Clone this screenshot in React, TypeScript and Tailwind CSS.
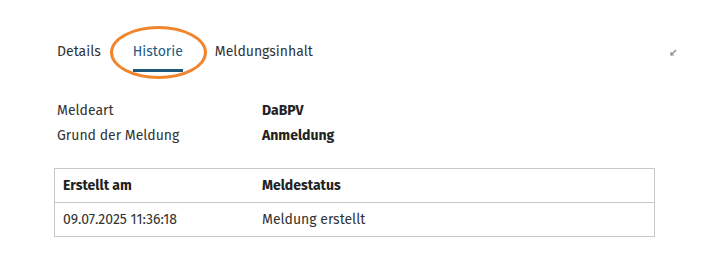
import React from "react";

export default function App() {
  return (
    <div
      className="w-[715px] h-[273px] bg-white text-[#333333] text-[14px] pt-[40px] pl-[57px] pr-[40px]"
      style={{ fontFamily: '"Fira Sans", "Open Sans", "Noto Sans", sans-serif' }}
    >
      <div className="flex items-start justify-between">
        <div className="flex gap-[32px]">
          <div className="h-[34px] leading-[24px] text-[#333]">Details</div>
          <div className="relative h-[34px] leading-[24px] text-[#1d5a84]">
            Historie
            <div className="absolute left-0 right-0 top-[29px] h-[2.5px] bg-[#1d5778]" />
            <div className="absolute left-[-23px] top-[-14px] w-[97px] h-[53px] rounded-[50%] border-[3px] border-[#f0852d]" />
          </div>
          <div className="h-[34px] leading-[24px] text-[#333]">Meldungsinhalt</div>
        </div>
        <svg width="10" height="10" viewBox="0 0 10 10" className="mt-[8px] mr-[-3px]">
          <path d="M8 2 L3 7" stroke="#888" strokeWidth="1.2" />
          <path d="M3 4 L3 7 L6 7" stroke="#888" strokeWidth="1.2" fill="none" />
        </svg>
      </div>

      <div className="mt-[25px] grid grid-cols-[205px_1fr] gap-y-[1px] leading-[24px]">
        <div>Meldeart</div>
        <div className="font-bold text-[#222]">DaBPV</div>
        <div>Grund der Meldung</div>
        <div className="font-bold text-[#222]">Anmeldung</div>
      </div>

      <div className="mt-[20px] ml-[-3px] w-[601px] border border-[#c8c8c8]">
        <div className="grid grid-cols-[199px_1fr] h-[34px] items-center border-b border-[#c8c8c8] px-[8px] font-bold text-[#222]">
          <div>Erstellt am</div>
          <div>Meldestatus</div>
        </div>
        <div className="grid grid-cols-[199px_1fr] h-[33px] items-center px-[8px]">
          <div>09.07.2025 11:36:18</div>
          <div>Meldung erstellt</div>
        </div>
      </div>
    </div>
  );
}
